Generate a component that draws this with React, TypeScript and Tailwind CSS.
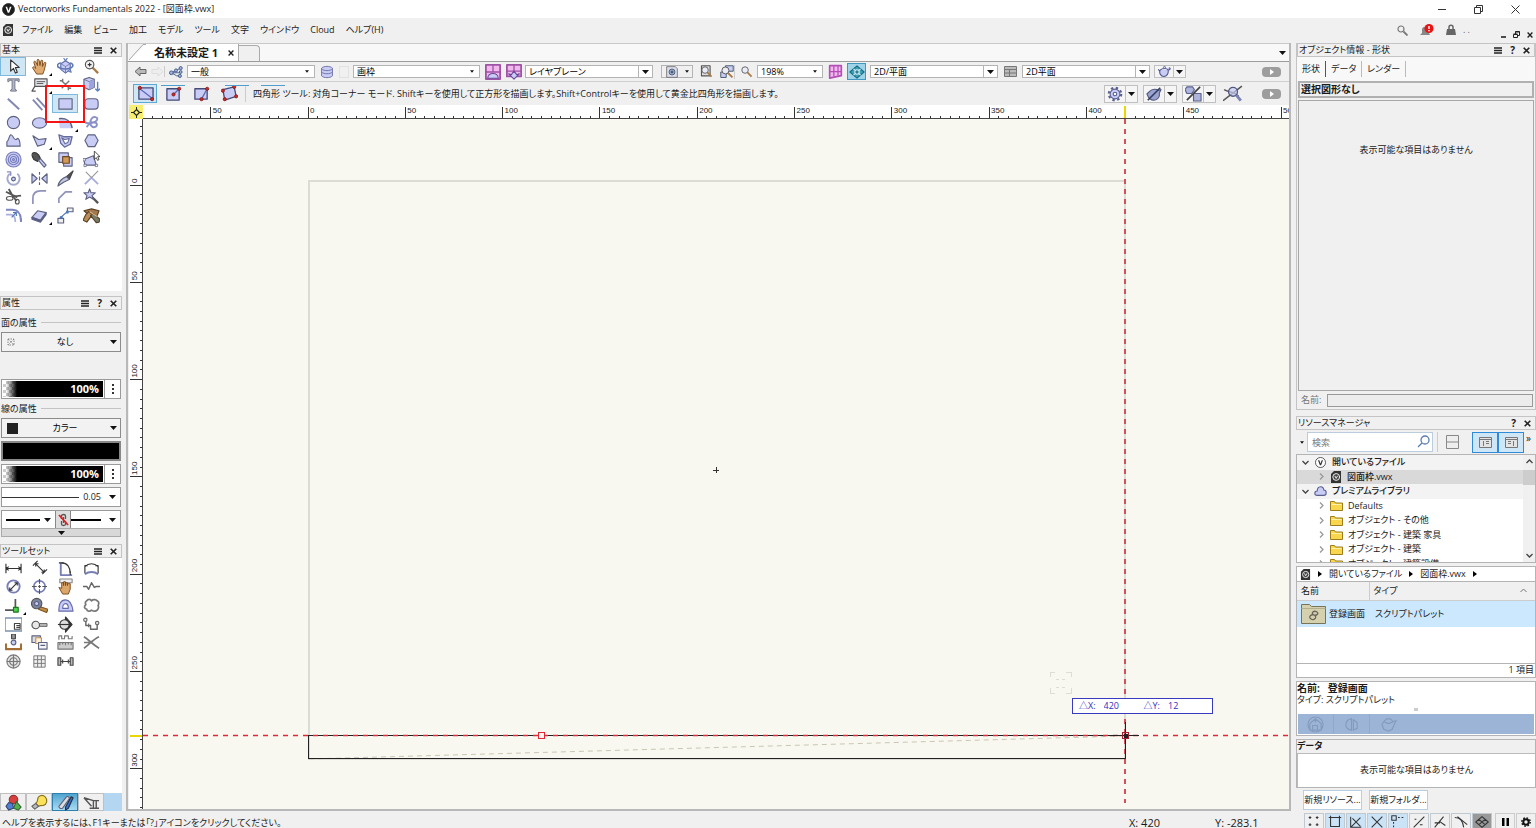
import type { ReactNode } from "react";
import { clsx } from "clsx";

const LAV = "#c9cdf6";
const INK = "#5d6280";

const Ico = ({ size = 18, children }: { size?: number; children: ReactNode }) => (
  <svg
    width={size}
    height={size}
    viewBox="0 0 18 18"
    fill="none"
    stroke={INK}
    strokeWidth="1.2"
    strokeLinejoin="round"
    className="shrink-0"
    aria-hidden="true"
  >
    {children}
  </svg>
);

const Caret = ({ small }: { small?: boolean }) => (
  <svg width={small ? 4 : 7} height={small ? 3 : 4} viewBox="0 0 7 4" className="shrink-0" aria-hidden="true">
    <path d="M0 0h7L3.5 4z" fill="#111" />
  </svg>
);

const CloseIcon = ({ size = 7 }: { size?: number }) => (
  <svg width={size} height={size} viewBox="0 0 7 7" stroke="#222" strokeWidth="1.6" aria-hidden="true">
    <path d="M.7.7l5.6 5.6M6.3.7L.7 6.3" />
  </svg>
);

type Tool = { name: string; flyout?: boolean; selected?: boolean; icon: ReactNode };

const basicTools: Tool[] = [
  { name: "セレクション", selected: true, icon: <path d="M6 2v12l3-3 2 5 2-1-2-5h4z" fill="#fff" stroke="#333" /> },
  {
    name: "パン",
    flyout: true,
    icon: (
      <path
        d="M6 17l-4-6c-1-1.500 1-2.300 2-1l1 1L3 4.500c0-1.300 1.500-1.500 2-.3L7 8 6.500 2.500c0-1.400 1.800-1.400 2.100 0L9.500 8l1-5c.4-1.200 2-.9 1.900.4L12 9l2-4c.7-1 2-.4 1.700.8L14 13l-1.500 4z"
        fill="#e0ab70"
        stroke="#7a4a1c"
        strokeWidth="1"
      />
    ),
  },
  {
    name: "フライオーバー",
    icon: (
      <g>
        <path d="M9 3l5 3v6l-5 4-5-4V6z" fill={LAV} stroke="#5f6ea8" />
        <path d="M4 6l5 3 5-3M9 9v6" stroke="#5f6ea8" strokeWidth=".8" />
        <path d="M4 5C0 6-1 9 3 10.500c4 1.500 9 1.200 12-.2 3-1.500 2-4.300-1-5.300" stroke="#5f79b5" strokeWidth="1.700" />
        <path d="M7 0l2 3 2-3M14 12l1 3-3-1" stroke="#5f79b5" />
      </g>
    ),
  },
  {
    name: "拡大表示",
    icon: (
      <g>
        <path d="M10 10l6 6" stroke="#a97a45" strokeWidth="2.400" />
        <circle cx="7" cy="7" r="4.500" fill="#f2f2f4" stroke="#555" />
        <path d="M5 7h4M7 5v4" stroke="#333" />
      </g>
    ),
  },
  { name: "文字", icon: <path d="M3 3h12v3h-1l-1-1.500h-2.500V14l1.500.8V16H6v-1.200l1.500-.8V4.500H5L4 6H3z" fill="#b5b8c8" stroke="#666b80" strokeWidth=".9" /> },
  {
    name: "引出線付き注釈",
    flyout: true,
    icon: (
      <g stroke="#555">
        <path d="M4 3h13v8H4z" fill="#e8e8ee" />
        <path d="M6 6h9M6 8h7" strokeWidth="1" />
        <path d="M4 11l-3 5h4" />
      </g>
    ),
  },
  { name: "図形選択", icon: <path d="M5 5l8 8M13 5l-8 8M3 5h3V3M15 13h-3v2" stroke="#777" strokeWidth="1.500" /> },
  {
    name: "押し出し",
    icon: (
      <g>
        <path d="M1 3.500l5.500-2 5.500 2v8.500l-5.500 2.500L1 12z" fill={LAV} />
        <path d="M1 3.500L6.500 6 12 3.500" strokeWidth=".8" />
        <path d="M6.500 6v8.500L12 12V3.500z" fill="#9da3dd" stroke="none" />
        <path d="M15.500 6v10M13 13.500l2.500 2.500 2.500-2.500" stroke="#5c83bd" strokeWidth="1.500" />
      </g>
    ),
  },
  { name: "直線", icon: <path d="M3 4l12 11" stroke="#8488b4" strokeWidth="2.200" /> },
  { name: "ダブルライン", icon: <path d="M2 5l10 11M6 3l10 11" stroke="#8488b4" strokeWidth="2" /> },
  { name: "四角形", selected: true, icon: <rect x="2" y="4" width="14" height="11" fill={LAV} /> },
  { name: "隅の丸い四角形", icon: <rect x="2" y="4" width="14" height="11" rx="3.500" fill={LAV} /> },
  { name: "円", icon: <circle cx="9" cy="9" r="6.500" fill={LAV} /> },
  { name: "楕円", icon: <ellipse cx="9" cy="9.500" rx="7.500" ry="5.500" fill={LAV} /> },
  {
    name: "円弧",
    flyout: true,
    icon: (
      <g>
        <path d="M2 6c7-2 12 2 13 9H3z" fill={LAV} stroke="none" />
        <path d="M2 5c8-1 13 3 14 10" strokeWidth="1.500" />
      </g>
    ),
  },
  {
    name: "フリーハンド",
    icon: <path d="M1 8c3 3 12 2 14-2 1-3-4-4-6-1s-2 8 2 9c4 0 5-4 2-5-4-1-8 2-9 5" stroke="#8a90c8" strokeWidth="2" />,
  },
  { name: "曲線", icon: <path d="M2 15V10c2 0 2-6 4-7s3 5 5 5 2-2 3-1 2 3 2 8z" fill={LAV} /> },
  { name: "多角形", flyout: true, icon: <path d="M2 4l6 4 8-1-2 6-7 2z" fill={LAV} /> },
  {
    name: "ポリライン",
    icon: (
      <g stroke="#666c9c">
        <path d="M2 3l5 2 9 0-2 8-6 3-4-4z" fill={LAV} strokeWidth="1.400" />
        <path d="M5 6l3 2 5-1-1.500 4-3 1.500z" fill="#fff" />
      </g>
    ),
  },
  { name: "正多角形", icon: <path d="M5.500 3h7L16 9l-3.500 6.500h-7L2 9z" fill={LAV} /> },
  {
    name: "らせん",
    icon: (
      <g stroke="#777dba">
        <circle cx="9" cy="9" r="8" fill={LAV} />
        <circle cx="9" cy="9" r="5.500" />
        <circle cx="9" cy="9" r="3.200" />
        <circle cx="9" cy="9" r="1" />
      </g>
    ),
  },
  {
    name: "アイドロッパ",
    icon: (
      <g>
        <path d="M2 2c2-1 4 0 6 2l2 4-3 3-4-2C1 6 1 3 2 2z" fill="#555" stroke="#333" />
        <path d="M8 10l6 7 2-2-6-7z" fill={LAV} />
      </g>
    ),
  },
  {
    name: "クリップ",
    icon: (
      <g>
        <path d="M2 2h10v10H2zM7 7h9v9H7z" fill={LAV} />
        <path d="M6 6h7v7H6z" fill="#d39a56" stroke="#6b4720" />
      </g>
    ),
  },
  {
    name: "変形",
    icon: (
      <g>
        <path d="M1 9l10-4 3 10H2z" fill={LAV} />
        <path d="M0 8h2.500v2.500H0zM1 14h2.500v2.500H1zM13 14h2.500v2.500H13z" fill="#fff" strokeWidth=".8" />
        <path d="M12 0v9l2-2 1.500 3 1.500-1-1.500-3H18z" fill="#fff" stroke="#333" strokeWidth=".9" />
      </g>
    ),
  },
  {
    name: "回転",
    icon: (
      <g>
        <path d="M5 4a6.500 6.500 0 1 0 8 0" stroke="#a3a8cf" strokeWidth="2" />
        <circle cx="9" cy="9.500" r="2" fill={LAV} />
        <path d="M2 2h4v4" stroke="#8b90bd" strokeWidth="1.500" />
      </g>
    ),
  },
  { name: "ミラー", icon: <path d="M1 4v10l5.500-5zM17 4v10l-5.500-5zM9 2v3M9 7v4M9 13v3" fill={LAV} /> },
  {
    name: "切断",
    icon: (
      <g>
        <path d="M17 1l-4 9-3-3z" fill="#555" stroke="#444" />
        <path d="M10 7l3 3-6 3-6 4c1-5 4-8 9-10z" fill="#c4c8da" />
      </g>
    ),
  },
  {
    name: "トリミング",
    icon: (
      <g strokeWidth="2">
        <path d="M2 15L9 8l7 7" stroke="#a9addb" />
        <path d="M16 1L9 8 3 2" stroke="#999" strokeWidth="1.200" />
      </g>
    ),
  },
  {
    name: "消しゴム",
    icon: (
      <g stroke="#555">
        <path d="M1 4l12 6M4 1l5 9" strokeWidth="2" />
        <path d="M17 8l-9 1M9 9l3 5" strokeWidth="1.800" />
        <ellipse cx="5" cy="11" rx="3.500" ry="2" />
        <ellipse cx="13" cy="14.500" rx="2" ry="2.500" />
      </g>
    ),
  },
  { name: "フィレット", icon: <path d="M2 17v-6c0-5 3-8 8-8h6" stroke="#8f93bd" strokeWidth="1.800" /> },
  { name: "面取り", icon: <path d="M2 16v-5l7-7h7" stroke="#8f93bd" strokeWidth="1.800" /> },
  {
    name: "マジックワンド",
    icon: (
      <g>
        <path d="M9 9l7 7" stroke="#555" strokeWidth="2.400" />
        <path d="M7 1l1.500 4L13 5 9.500 8l1.500 4-4-2.500L3 12l1.200-4L1 5h4.500z" fill={LAV} />
      </g>
    ),
  },
  {
    name: "オフセット",
    icon: (
      <g stroke="#8086c0">
        <path d="M1 3h7c6 0 9 4 9 13" strokeWidth="2.200" />
        <path d="M1 8h5c4 0 5 3 5 8" stroke="#aab0dd" strokeWidth="1.800" />
        <path d="M7 11l5-5M8.500 6H12v3.500" stroke="#4b78b8" />
      </g>
    ),
  },
  {
    name: "イレーサ",
    flyout: true,
    icon: (
      <g>
        <path d="M1 11l6-7 9 2-6 8z" fill={LAV} />
        <path d="M1 11v2l9 3 6-8V6l-6 8z" fill="#4c5590" />
      </g>
    ),
  },
  {
    name: "整列",
    icon: (
      <g>
        <path d="M4 11l8-7" stroke="#4b78b8" />
        <path d="M1 12h6v5H1zM11 1h6v4h-6z" fill="#eee" />
        <path d="M3 11h3M11 7v-3" stroke="#4b78b8" strokeWidth="2.500" />
      </g>
    ),
  },
  {
    name: "属性マッピング",
    icon: (
      <g stroke="#5a3e22">
        <path d="M1 4l8-2 8 2-2 5-6 2z" fill="#a47a4c" />
        <path d="M3 8l3-3 4 3-6 8-4-2z" fill="#b98e58" />
        <path d="M8 9l3-2 7 6-1 3-3 .5z" fill="#787d6c" />
        <path d="M7 5l8 5" stroke="#d6b58a" />
      </g>
    ),
  },
];

const setTools: Tool[] = [
  { name: "縦横寸法", icon: <path d="M1 4v10M17 4v10M1 9h16M4 7L1 9l3 2M14 7l3 2-3 2" stroke="#333" /> },
  { name: "斜め寸法", icon: <path d="M5 4l9 9M2 6l5-5M12 15l5-5M5 7V4h3M14 10v3h-3" stroke="#333" /> },
  {
    name: "円弧角度寸法",
    icon: (
      <g>
        <path d="M4 3v13h12" stroke="#777db5" strokeWidth="2" />
        <path d="M5 3c6 0 9 5 9 11" stroke="#333" />
        <path d="M2 3h5M14 12v4" stroke="#333" />
      </g>
    ),
  },
  {
    name: "円弧寸法",
    icon: (
      <g>
        <path d="M2 15c4-3 10-3 14 0" stroke="#777db5" strokeWidth="2" />
        <path d="M2 14V7c4-4 10-4 14 0v7M2 9V6h3M16 9V6h-3" stroke="#333" />
      </g>
    ),
  },
  {
    name: "直径寸法",
    icon: (
      <g>
        <circle cx="9" cy="9" r="6.500" stroke="#777db5" strokeWidth="2" />
        <path d="M5 13l8-8M10 5h3v3M5 10v3h3" stroke="#333" />
      </g>
    ),
  },
  {
    name: "中心マーク",
    icon: (
      <g>
        <circle cx="9" cy="9" r="6" stroke="#777db5" strokeWidth="1.800" />
        <path d="M9 1v16M1 9h16" stroke="#555" strokeDasharray="5 1.500 3 1.500" />
      </g>
    ),
  },
  {
    name: "選択寸法",
    icon: (
      <g>
        <path d="M3 1h13v4H3z" fill="#eee" stroke="#888" />
        <path d="M6 17l-4-7 3 1V5h2v3-4h2v4-3h2v3-2h3v6l-2 5z" fill="#dca66b" stroke="#7a4a1c" strokeWidth="1" />
      </g>
    ),
  },
  { name: "切断記号", icon: <path d="M0 9h4l2 3 3-7 3 5 2-1h4" stroke="#666" strokeWidth="1.500" /> },
  {
    name: "基準点",
    flyout: true,
    icon: (
      <g>
        <path d="M0 14h11V2" stroke="#555" strokeWidth="1.800" />
        <rect x="9" y="11" width="5" height="5" fill="#4fd04f" stroke="#187a18" />
      </g>
    ),
  },
  {
    name: "距離計測",
    icon: (
      <g>
        <path d="M9 10l9 3-1.500 3.500L8 13z" fill="#c58d45" stroke="#7a5420" />
        <circle cx="6" cy="7" r="5.500" fill="#7c839d" stroke="#555" />
        <circle cx="6" cy="7" r="2.200" fill={LAV} />
      </g>
    ),
  },
  {
    name: "分度器",
    icon: (
      <path
        d="M2 15c0-8 2-12 7-12s7 5 8 12zM6 12h6c0-3-1-5-3-5s-3 2-3 5z"
        fill={LAV}
        stroke="#666cab"
        fillRule="evenodd"
      />
    ),
  },
  {
    name: "雲マーク",
    icon: (
      <path
        d="M4 4c1-2 4-2 5 0 2-2 5-1 6 0 2 1 2 3 1 5 1 2 0 4-1 5-2 2-4 1-6 0-2 2-5 1-5-1-3-1-3-3-1-5-1-2-1-3 1-4z"
        stroke="#777"
        strokeWidth="1.800"
      />
    ),
  },
  {
    name: "図面枠",
    icon: (
      <g>
        <path d="M0 2h18v14H0z" fill="#fff" stroke="#7d93ad" strokeWidth="1.600" />
        <path d="M10 8h6v6h-6zM12 10h4M12 12h4" stroke="#444" />
      </g>
    ),
  },
  {
    name: "詳細マーク",
    icon: (
      <g>
        <path d="M9 8h8v3H9z" fill="#bbb" stroke="#555" strokeWidth=".9" />
        <circle cx="5" cy="9.500" r="4" fill="#e8e8e8" stroke="#555" />
      </g>
    ),
  },
  {
    name: "断面マーク",
    icon: (
      <g stroke="#333">
        <path d="M9 1l7 8-7 8z" fill="#333" />
        <circle cx="8" cy="9" r="5" fill="#ddd" />
        <path d="M1 9h13" />
      </g>
    ),
  },
  {
    name: "展開マーク",
    icon: (
      <g stroke="#666">
        <path d="M3 5v5h5v4h7V9" strokeWidth="1.500" />
        <circle cx="2.500" cy="4" r="1.800" fill="#eee" />
        <circle cx="15" cy="7.500" r="1.800" fill="#eee" />
        <path d="M6 8v4" />
      </g>
    ),
  },
  {
    name: "スタンプ",
    icon: (
      <g>
        <path d="M1 10v6h16v-6" stroke="#a56d32" strokeWidth="2.200" />
        <path d="M7 0h4v5H7z" fill="#999" stroke="#444" />
        <circle cx="9" cy="9" r="2.500" fill={LAV} />
      </g>
    ),
  },
  {
    name: "引出線",
    icon: (
      <g>
        <path d="M1 2h9v7H1z" fill="#ddd" />
        <path d="M5 4h6v6H5z" fill="#fff0d8" stroke="#c0905a" />
        <path d="M8 9h9v7H8zM10 12h5" fill="#f4f4f4" />
      </g>
    ),
  },
  {
    name: "スケールバー",
    icon: (
      <g stroke="#777">
        <path d="M1 9h16v7H1z" fill="#ccc" />
        <path d="M3 9v3M6 9v2M9 9v3M12 9v2M15 9v3M2 6V2h3v3h3V2h4v3h4V2" />
      </g>
    ),
  },
  { name: "破断線", icon: <path d="M1 3c5 3 9 8 16 12M1 15C6 12 10 6 17 3M1 9h7" stroke="#777" strokeWidth="1.800" /> },
  {
    name: "グリッド円",
    icon: (
      <g stroke="#777">
        <circle cx="9" cy="9" r="7" fill="#e4e4e4" />
        <circle cx="9" cy="9" r="4" />
        <path d="M9 2v14M2 9h14" />
      </g>
    ),
  },
  { name: "グリッド", icon: <path d="M3 3h12v12H3zM7 3v12M11 3v12M3 7h12M3 11h12" fill="#f0f0f0" stroke="#777" strokeWidth="1" /> },
  {
    name: "連結",
    icon: (
      <g stroke="#444">
        <path d="M1 5h3v8H1zM14 5h3v8h-3z" fill="#bbb" />
        <path d="M4 9h10M6 7v4M12 7v4" />
      </g>
    ),
  },
];

const ToolGrid = ({ tools, className }: { tools: Tool[]; className: string }) => (
  <div className={clsx("grid w-[104px] auto-rows-fr grid-cols-4", className)}>
    {tools.map((tool) => (
      <button
        key={tool.name}
        aria-label={tool.name}
        className={clsx(
          "relative flex items-center justify-center",
          tool.selected && "border border-[#7cb9dc] bg-[#cfe6f5]",
        )}
      >
        <Ico size={17}>{tool.icon}</Ico>
        {tool.flyout && (
          <svg width="3" height="3" className="absolute right-0 bottom-0" aria-hidden="true">
            <path d="M3 0v3H0z" fill="#000" />
          </svg>
        )}
      </button>
    ))}
  </div>
);

const PanelHeader = ({ title, menu, help }: { title: string; menu?: boolean; help?: boolean }) => (
  <div className="flex h-[14px] shrink-0 items-center border border-[#c4c4c4] bg-[#f0f0f0] pr-1 pl-px">
    <h2 className="flex-1 truncate leading-3">{title}</h2>
    <div className="flex items-center gap-2">
      {menu && (
        <button aria-label="メニュー">
          <svg width="8" height="7" stroke="#222" strokeWidth="1.400">
            <path d="M0 1h8M0 3.500h8M0 6h8" />
          </svg>
        </button>
      )}
      {help && (
        <button aria-label="ヘルプ" className="text-[10px] leading-3 font-bold">
          ?
        </button>
      )}
      <button aria-label="閉じる">
        <CloseIcon />
      </button>
    </div>
  </div>
);

const Combo = ({ label, value, className, small }: { label: string; value: string; className: string; small?: boolean }) => (
  <div className={clsx("relative h-[13px] shrink-0", className)}>
    <select
      aria-label={label}
      defaultValue={value}
      className="block h-full w-full appearance-none border border-[#b4b4b4] bg-white pl-[3px] leading-[11px] text-black"
    >
      <option>{value}</option>
    </select>
    <span
      className={clsx(
        "pointer-events-none absolute inset-y-px right-px flex w-[14px] items-center justify-center bg-white",
        !small && "border-l border-[#b4b4b4]",
      )}
    >
      <Caret small={small} />
    </span>
  </div>
);

const DropButton = ({ label, className, children }: { label: string; className: string; children: ReactNode }) => (
  <button aria-label={label} className={clsx("flex shrink-0 items-stretch border border-[#c0c0c0] bg-[#f5f5f5]", className)}>
    <span className="flex flex-1 items-center justify-center">{children}</span>
    <span className="flex w-3 items-center justify-center border-l border-[#c0c0c0]">
      <Caret />
    </span>
  </button>
);

const Pill = () => (
  <button aria-label="さらに表示" className="flex h-[10px] w-[19px] items-center justify-center rounded-[4px] bg-[#9d9d9d]">
    <svg width="4" height="6">
      <path d="M0 0l4 3-4 3z" fill="#fff" />
    </svg>
  </button>
);

const IconBtn = ({ label, className, children }: { label: string; className: string; children: ReactNode }) => (
  <button aria-label={label} className={clsx("flex shrink-0 items-center justify-center", className)}>
    {children}
  </button>
);

const Glass = () => (
  <g>
    <path d="M10 10l6 6" stroke="#a97a45" strokeWidth="2.400" />
    <circle cx="7" cy="7" r="4.500" fill="#e9ecf6" stroke="#555" />
  </g>
);

const Logo = ({ size = 12, inverse }: { size?: number; inverse?: boolean }) => (
  <svg width={size} height={size} viewBox="0 0 14 14" className="shrink-0" aria-hidden="true">
    <circle cx="7" cy="7" r="6.400" fill={inverse ? "#fff" : "#1d1d1d"} stroke="#333" />
    <path d="M3.800 4h1.700L7 8.300 8.500 4h1.700L7.800 10.500H6.200z" fill={inverse ? "#333" : "#fff"} />
  </svg>
);

const DocIcon = ({ size = 12 }: { size?: number }) => (
  <svg width={size} height={size} viewBox="0 0 12 12" className="shrink-0" aria-hidden="true">
    <path d="M1 3l3-3h7v12H1z" fill="#333" />
    <circle cx="6.200" cy="6" r="3.400" fill="#444" stroke="#eee" />
    <path d="M4.800 4.800l1.400 2.600 1.400-2.600" fill="none" stroke="#eee" />
  </svg>
);

const menus = ["ファイル", "編集", "ビュー", "加工", "モデル", "ツール", "文字", "ウインドウ", "Cloud", "ヘルプ(H)"];

const TitleBar = () => (
  <header className="flex h-[18px] shrink-0 items-center bg-white pl-[2px]">
    <Logo size={13} />
    <h1 className="ml-[3px] flex-1">Vectorworks Fundamentals 2022 - [図面枠.vwx]</h1>
    <div className="flex items-center gap-7 pr-4">
      <IconBtn label="最小化" className="h-3 w-[9px]">
        <svg width="8" height="8" stroke="#333"><path d="M0 4.500h8" /></svg>
      </IconBtn>
      <IconBtn label="元に戻す" className="h-3 w-[9px]">
        <svg width="9" height="9" stroke="#333" fill="none"><path d="M.5 2.500h6v6h-6zM2.500 2.500v-2h6v6h-2" /></svg>
      </IconBtn>
      <IconBtn label="閉じる" className="h-3 w-[9px]">
        <svg width="9" height="9" stroke="#333"><path d="M.5.5l8 8M8.500.5l-8 8" /></svg>
      </IconBtn>
    </div>
  </header>
);

const MenuBar = () => (
  <nav className="flex h-[24px] shrink-0 items-center pl-[2px]">
    <DocIcon size={12} />
    <ul className="ml-2 flex flex-1 gap-[11px]">
      {menus.map((m) => (
        <li key={m}>
          <button>{m}</button>
        </li>
      ))}
    </ul>
    <div className="flex items-center gap-3 pr-[30px]">
      <IconBtn label="検索" className="w-[11px]">
        <svg width="11" height="11" viewBox="0 0 11 11" fill="none" stroke="#777" strokeWidth="1.200">
          <circle cx="4" cy="4" r="3" />
          <path d="M6.500 6.500l4 4" strokeWidth="1.800" />
        </svg>
      </IconBtn>
      <IconBtn label="通知" className="w-[14px]">
        <svg width="14" height="13" viewBox="0 0 14 13">
          <path d="M2 9V5c1-3 5-3 7 0v4l1 2H0z" fill="#888" />
          <circle cx="9" cy="4.500" r="4.500" fill="#e81313" />
          <path d="M9 2v3M9 6v1.200" stroke="#fff" strokeWidth="1.400" />
        </svg>
      </IconBtn>
      <div className="flex items-center gap-[7px]">
        <IconBtn label="ログイン" className="w-[10px]">
          <svg width="10" height="12" viewBox="0 0 10 12">
            <path d="M3 6V3c0-2.500 4-2.500 4 0v3" fill="none" stroke="#666" strokeWidth="1.500" />
            <path d="M1 5h8l1 6H0z" fill="#666" />
          </svg>
        </IconBtn>
        <span className="text-[#666]">. .</span>
      </div>
    </div>
    <div className="flex items-center gap-[6px] self-end pr-[3px] pb-[4px]">
      <IconBtn label="図面を最小化" className="w-[7px]">
        <svg width="7" height="7" stroke="#222" strokeWidth="1.600"><path d="M1 6h5" /></svg>
      </IconBtn>
      <IconBtn label="図面を元に戻す" className="w-[7px]">
        <svg width="7" height="7" stroke="#222" fill="none"><path d="M.5 3.500h4v3h-4zM2.500 3.500v-3h4v4h-2M.5 3h4M2.500 1h4" /></svg>
      </IconBtn>
      <IconBtn label="図面を閉じる" className="w-[7px]">
        <CloseIcon size={6} />
      </IconBtn>
    </div>
  </nav>
);

const OpacityRow = ({ label }: { label: string }) => (
  <div className="flex h-[20px] border border-[#9a9a9a] bg-white">
    <button
      aria-label={label}
      className="m-px flex flex-1 items-center justify-end bg-[linear-gradient(90deg,transparent_3px,#000_14px),repeating-conic-gradient(#ccc_0_25%,#fff_0_50%)] bg-[size:100%_100%,6px_6px] pr-1 text-[11px] font-bold text-white"
    >
      100%
    </button>
    <button aria-label={`${label} 設定`} className="flex w-[16px] items-center justify-center border-l border-[#9a9a9a]">
      <svg width="2" height="11" fill="#333">
        <path d="M0 0h2v2H0zM0 4h2v2H0zM0 8h2v2H0z" />
      </svg>
    </button>
  </div>
);

const SectionLabel = ({ children }: { children: ReactNode }) => (
  <h3 className="flex h-[13px] items-center gap-1">
    {children}
    <span className="h-px flex-1 bg-[#c4c4c4]" />
  </h3>
);

const WideSelect = ({ label, value, swatch }: { label: string; value: string; swatch: ReactNode }) => (
  <div className="relative h-[20px]">
    <select
      aria-label={label}
      defaultValue={value}
      className="block h-full w-full appearance-none border border-[#8c8c8c] bg-[#f2f2f2] pr-[6px] pl-[14px] text-center leading-4 text-black [text-align-last:center]"
    >
      <option>{value}</option>
    </select>
    <span className="pointer-events-none absolute inset-y-0 left-[6px] flex items-center">{swatch}</span>
    <span className="pointer-events-none absolute inset-y-0 right-1 flex items-center">
      <Caret />
    </span>
  </div>
);

const Attributes = () => (
  <section className="mt-[5px] flex shrink-0 flex-col">
    <PanelHeader title="属性" menu help />
    <div className="flex flex-col px-px pt-[6px]">
      <SectionLabel>面の属性</SectionLabel>
      <div className="mt-[3px] mb-[27px]">
        <WideSelect
          label="面の属性"
          value="なし"
          swatch={
            <svg width="8" height="8" stroke="#888" strokeDasharray="1.500 1">
              <path d="M1 1h6v6H1zM1 1l6 6M7 1L1 7" fill="none" />
            </svg>
          }
        />
      </div>
      <OpacityRow label="面の不透明度" />
      <div className="mt-[3px]">
        <SectionLabel>線の属性</SectionLabel>
      </div>
      <div className="mt-[3px] flex flex-col gap-[3px]">
        <WideSelect label="線の属性" value="カラー" swatch={<span className="size-[11px] bg-[#222]" />} />
        <button aria-label="線の色" className="h-[20px] border-2 border-[#888] bg-black" />
        <OpacityRow label="線の不透明度" />
        <button className="flex h-[20px] items-center gap-1 border border-[#9a9a9a] bg-white pr-1">
          <span className="h-px flex-1 bg-[#333]" />
          0.05
          <span className="ml-1">
            <Caret />
          </span>
        </button>
        <div>
          <div className="flex h-[18px] border border-b-0 border-[#9a9a9a] bg-white">
            <button aria-label="始点マーカー" className="flex flex-1 items-center gap-1 px-1">
              <span className="h-[2px] flex-1 bg-black" />
              <Caret />
            </button>
            <button aria-label="マーカーの連動" className="flex w-[16px] items-center justify-center border-x border-[#888] bg-[#ddd]">
              <svg width="11" height="14" viewBox="0 0 11 14" fill="none">
                <path d="M3.500 6V3c0-2 4-2 4 0v3M3.500 8v3c0 2 4 2 4 0V8M5.500 4v6" stroke="#555" strokeWidth="1.300" />
                <path d="M1 2l9 10" stroke="#e02020" strokeWidth="1.800" />
              </svg>
            </button>
            <button aria-label="終点マーカー" className="flex flex-1 items-center gap-2 pr-1">
              <span className="h-[2px] flex-1 bg-black" />
              <Caret />
            </button>
          </div>
          <button aria-label="展開" className="flex h-[9px] w-full items-center justify-center border border-[#aaa] bg-[#d8d8d8]">
            <Caret />
          </button>
        </div>
      </div>
    </div>
  </section>
);

const ToolSets = () => (
  <section className="mt-[7px] flex min-h-0 flex-1 flex-col">
    <PanelHeader title="ツールセット" menu />
    <div className="flex flex-1 flex-col bg-white pt-px">
      <ToolGrid tools={setTools} className="h-[112px]" />
      <div className="mt-auto flex h-[18px] bg-[#b5d6f0]">
        <IconBtn label="ビジュアライズ" className="w-[26px] border border-[#c0c0c0] bg-[#f0f0f0]">
          <Ico size={17}>
            <circle cx="9" cy="6" r="4.500" fill="#d84040" stroke="#933" />
            <path d="M1 13l3-4 4 1 1 5-5 2z" fill="#4f7fd6" stroke="#346" />
            <path d="M9 15l3-7 5 6-3 3z" fill="#53b04e" stroke="#363" />
          </Ico>
        </IconBtn>
        <IconBtn label="照明" className="w-[26px] border border-[#c0c0c0] bg-[#f0f0f0]">
          <Ico size={17}>
            <path d="M15 3c-3-3-8-1-8 3 0 2-1 3-2 4l3 3c1-1 3-1 5-1 4-1 5-6 2-9z" fill="#fbe25a" stroke="#8a7520" />
            <path d="M5 10l-4 3 3 3 4-3z" fill="#bbb" stroke="#666" />
          </Ico>
        </IconBtn>
        <IconBtn label="寸法/注釈" className="w-[26px] border border-[#2f7fae] bg-gradient-to-b from-[#4ea4d0] to-[#a8dbf4]">
          <Ico size={17}>
            <path d="M2 13L10 3c2-1 3 0 3 2L6 15c-2 1-4 0-4-2z" fill="#ddd" />
            <path d="M9 14L15 3l2 1-5 11-3 2z" fill="#3b6fd0" stroke="#234" />
          </Ico>
        </IconBtn>
        <IconBtn label="ファスナー" className="w-[26px] border border-[#c0c0c0] bg-[#f0f0f0]">
          <Ico size={17}>
            <path d="M1 4l10 3h6M11 7v8M7 15h10M1 4l8 9M14 7v8" stroke="#555" strokeWidth="1.500" />
          </Ico>
        </IconBtn>
      </div>
    </div>
  </section>
);

const LeftColumn = () => (
  <aside className="flex w-[122px] shrink-0 flex-col">
    <PanelHeader title="基本" menu />
    <section className="relative h-[234px] shrink-0 bg-white">
      <ToolGrid tools={basicTools} className="h-[168px]" />
      <div className="pointer-events-none absolute top-[28px] left-[45px] h-[38px] w-[40px] border-2 border-[#f51414]" />
    </section>
    <Attributes />
    <ToolSets />
  </aside>
);

const ViewBar = () => (
  <div className="flex h-[20px] shrink-0 items-center gap-1 border-t border-[#9c9c9c] pl-[5px]">
    <IconBtn label="前の画面" className="w-[14px]">
      <svg width="13" height="11" fill="#b9b9b9" stroke="#666"><path d="M6 1L1 5.500 6 10V7.500h6v-4H6z" /></svg>
    </IconBtn>
    <IconBtn label="次の画面" className="w-[14px] border-r border-[#ccc]">
      <svg width="13" height="11" fill="#eee" stroke="#ddd"><path d="M7 1l5 4.500L7 10V7.500H1v-4h6z" /></svg>
    </IconBtn>
    <IconBtn label="クラス" className="w-[14px]">
      <Ico size={14}>
        <path d="M3 10l6-3 6-3M3 10l6 0h6M3 10l7 4h5" stroke="#445a88" />
        <circle cx="3" cy="10" r="2.400" fill="#9fb2dd" stroke="#445a88" />
        <circle cx="9" cy="7" r="2" fill="#9fb2dd" stroke="#445a88" />
        <circle cx="15" cy="4" r="2" fill="#9fb2dd" stroke="#445a88" />
        <circle cx="15" cy="9" r="1.800" fill="#9fb2dd" stroke="#445a88" />
        <circle cx="14" cy="14" r="2" fill="#9fb2dd" stroke="#445a88" />
      </Ico>
    </IconBtn>
    <Combo label="アクティブクラス" value="一般" className="w-[128px]" small />
    <IconBtn label="レイヤ" className="w-4">
      <Ico size={14}>
        <path d="M2 4c3-3 11-3 14 0v10c-3 3-11 3-14 0z" fill={LAV} stroke="#6a71a5" />
        <path d="M2 5c3 3 11 3 14 0M2 9c3 3 11 3 14 0" stroke="#6a71a5" />
      </Ico>
    </IconBtn>
    <span className="h-3 w-[10px] border border-[#e2e2e2]" />
    <Combo label="アクティブレイヤ" value="画枠" className="w-[127px]" small />
    <IconBtn label="プラン回転" className="w-[18px]">
      <Ico size={16}>
        <path d="M1 1h16v16H1z" fill="#f1b8ee" stroke="#a052a5" strokeWidth="2" />
        <path d="M1 9h16M9 1v8" stroke="#a052a5" strokeWidth="1.500" />
        <path d="M3 16c1-7 11-7 12 0z" fill={LAV} stroke="#6a4a9a" />
      </Ico>
    </IconBtn>
    <IconBtn label="図形に合わせる" className="w-[15px]">
      <Ico size={16}>
        <path d="M1 1h16v13H1z" fill="#f1b8ee" stroke="#a052a5" strokeWidth="2" />
        <path d="M1 8h16M9 1v8" stroke="#a052a5" strokeWidth="1.500" />
        <path d="M3 11l3 1 3-4 3 4 3-1-6 6z" fill={LAV} stroke="#6a4a9a" />
      </Ico>
    </IconBtn>
    <Combo label="基準面" value="レイヤプレーン" className="w-[128px]" />
    <button aria-label="保存済みビュー" className="ml-1 flex h-[13px] w-8 shrink-0 items-center justify-around border border-[#b4b4b4]">
      <Ico size={12}>
        <path d="M1 1h13l3 3v13H1z" fill="#dde" stroke="#666" />
        <circle cx="9" cy="9" r="4.500" fill="#8fa8cc" stroke="#456" />
        <circle cx="9" cy="9" r="1.500" fill="#234" />
      </Ico>
      <Caret small />
    </button>
    <IconBtn label="用紙全体を見る" className="w-[18px]">
      <Ico size={13}>
        <path d="M2 1h12v14H2z" fill="#ddd" stroke="#555" strokeWidth="1.500" />
        <Glass />
      </Ico>
    </IconBtn>
    <IconBtn label="図形全体を見る" className="w-4 border-r border-[#ccc]">
      <Ico size={14}>
        <path d="M7 1h10v7H7zM1 9h7v7H1z" fill={LAV} stroke="#456" />
        <Glass />
      </Ico>
    </IconBtn>
    <IconBtn label="ズーム" className="w-[14px]">
      <Ico size={13}><Glass /></Ico>
    </IconBtn>
    <Combo label="拡大率" value="198%" className="w-[66px]" small />
    <IconBtn label="統合ビュー" className="w-4">
      <Ico size={15}>
        <path d="M2 2h14v12L2 17z" fill="#f1b8ee" stroke="#b44fb6" strokeWidth="2" />
        <path d="M2 9h14M7 2v13M12 2v12" stroke="#b44fb6" strokeWidth="1.500" />
      </Ico>
    </IconBtn>
    <IconBtn label="マルチビュー" className="h-[17px] w-[19px] border border-[#3f98bf] bg-[#9fd3e8]">
      <Ico size={16}>
        <path d="M9 2l8 7-8 7-8-7z" fill="#3ba0b5" stroke="#176a80" />
        <path d="M5 5.500l8 7M13 5.500l-8 7" stroke="#d5eef5" />
        <circle cx="9" cy="9" r="2.500" fill="#2a8098" stroke="#d5eef5" />
      </Ico>
    </IconBtn>
    <Combo label="ビュー" value="2D/平面" className="w-[128px]" />
    <IconBtn label="ビュー設定" className="w-4">
      <svg width="13" height="11" fill="#bbb" stroke="#777">
        <path d="M.5.5h12v10H.5zM.5 3.500h12M5.500 3.500v7M.5 7h12" />
      </svg>
    </IconBtn>
    <Combo label="投影の方法" value="2D平面" className="w-[128px]" />
    <DropButton label="レンダリング" className="h-[13px] w-8">
      <Ico size={13}>
        <path d="M3 7c3-3 9-3 11 0 3 0 4-3 1-3M3 7c-2 4 1 9 5 9s7-4 6-9M3 9L0 6" fill={LAV} stroke="#50558a" strokeWidth="1.500" />
        <circle cx="9" cy="3.500" r="1.500" fill={LAV} />
      </Ico>
    </DropButton>
    <span className="mr-2 ml-auto">
      <Pill />
    </span>
  </div>
);

const modeDots: { name: string; shape: string; line?: string; dots: number[][] }[] = [
  { name: "対角コーナー", shape: "M2 3h15v12H2z", line: "M3 4l13 10", dots: [[3, 3], [16, 15]] },
  { name: "中心", shape: "M2 4h13v12H2z", line: "M9 10l6-6", dots: [[9, 10], [15, 4]] },
  { name: "辺の中心", shape: "M2 4h13v11H2z", line: "M9 15l6-11", dots: [[9, 15], [15, 4]] },
  { name: "回転", shape: "M2 5l12-3 2 10-12 4z", dots: [[2, 6], [14, 2], [16, 12], [4, 15]] },
];

const ModeBar = () => (
  <div className="relative flex h-[24px] shrink-0 items-center border-t border-[#cfcfcf] pl-[5px]">
    <div className="flex gap-1">
      {modeDots.map((m, i) => (
        <button
          key={m.name}
          aria-label={m.name}
          className={clsx("flex h-[19px] w-6 items-center justify-center", i === 0 && "border border-[#5aaad6] bg-[#cfe6f5]")}
        >
          <Ico size={17}>
            <path d={m.shape} fill={LAV} stroke="#454b78" strokeWidth="1.400" />
            {m.line && <path d={m.line} stroke="#5a6cb8" strokeWidth="1.400" />}
            {m.dots.map(([x, y]) => (
              <circle key={`${x}-${y}`} cx={x} cy={y} r="1.700" fill="#c92b2b" stroke="#801515" strokeWidth=".8" />
            ))}
          </Ico>
        </button>
      ))}
    </div>
    <span className="absolute top-[3px] left-[33px] h-px w-6 bg-[#4d9fcd]" />
    <span className="absolute top-[3px] left-[97px] h-px w-6 bg-[#4d9fcd]" />
    <span className="absolute top-[3px] left-[133px] h-px w-6 bg-[#4d9fcd]" />
    <p className="ml-1 h-4 truncate border-l border-[#ccc] pl-[7px] leading-4">
      四角形 ツール: 対角コーナー モード. Shiftキーを使用して正方形を描画します。Shift+Controlキーを使用して黄金比四角形を描画します。
    </p>
    <div className="mr-2 ml-auto flex items-center gap-[5px]">
      <DropButton label="設定" className="h-[18px] w-[34px]">
        <Ico size={16}>
          <circle cx="9" cy="9" r="7" stroke="#59608e" strokeWidth="2.400" strokeDasharray="2.700 2.800" />
          <circle cx="9" cy="9" r="5.500" fill={LAV} stroke="#59608e" />
          <circle cx="9" cy="9" r="2" fill="#fff" stroke="#59608e" />
        </Ico>
      </DropButton>
      <DropButton label="表示設定" className="h-[18px] w-[34px]">
        <Ico size={16}>
          <path d="M4 6c3-3 8-3 10-1l3-1-2 4c1 4-2 8-6 8s-6-2-7-5L1 9z" fill="#9aa2cf" stroke="#50587f" />
          <path d="M2 16L16 2" stroke="#333a5c" strokeWidth="1.800" />
        </Ico>
      </DropButton>
      <DropButton label="図形表示" className="h-[18px] w-[34px]">
        <Ico size={17}>
          <path d="M2 2h6l2 3-3 4H2L0 5zM9 9h8v8H9z" fill="#aeb5dd" stroke="#59608e" />
          <path d="M2 16L16 2" stroke="#444" strokeWidth="1.800" />
        </Ico>
      </DropButton>
      <IconBtn label="スナップルーペ" className="w-6">
        <Ico size={20}>
          <path d="M0 15L17 2M1 5c5 3 8 1 13 6" stroke="#555" strokeWidth="1.400" />
          <circle cx="9" cy="7" r="4" fill={LAV} fillOpacity=".7" stroke="#50587f" />
          <path d="M12 10l4 5" stroke="#7a83b5" strokeWidth="2.600" />
        </Ico>
      </IconBtn>
      <span className="ml-3">
        <Pill />
      </span>
    </div>
  </div>
);

// 50 units on the drawing at 198%
const MAJOR = 97.3;
const MINOR = MAJOR / 10;

const HRuler = () => (
  <svg className="block h-[14px] w-full bg-white font-['Liberation_Sans',sans-serif]" shapeRendering="crispEdges">
    {Array.from({ length: 118 }, (_, i) => (
      <path key={i} d={`M${165 + (i - 16) * MINOR} 11v2`} stroke="#333" />
    ))}
    {Array.from({ length: 12 }, (_, i) => {
      const x = 165 + (i - 1) * MAJOR;
      return (
        <g key={i}>
          <path d={`M${x} 2v11`} stroke="#333" />
          <text x={x + 2} y="8" fontSize="8" fill="#222">
            {Math.abs(i - 1) * 50}
          </text>
        </g>
      );
    })}
    <path d="M0 13.500h2000" stroke="#444" />
    <path d="M982 1v12" stroke="#e8d800" strokeWidth="2" />
  </svg>
);

const VRuler = () => (
  <svg className="block h-full w-[14px] bg-white font-['Liberation_Sans',sans-serif]" shapeRendering="crispEdges">
    {Array.from({ length: 76 }, (_, i) => (
      <path key={i} d={`M11 ${66 + (i - 6) * MINOR}h2`} stroke="#333" />
    ))}
    {Array.from({ length: 7 }, (_, i) => {
      const y = 66 + i * MAJOR;
      return (
        <g key={i}>
          <path d={`M1 ${y}h12`} stroke="#333" />
          <text transform={`translate(8 ${y - 2}) rotate(-90)`} fontSize="8" fill="#222">
            {i * 50}
          </text>
        </g>
      );
    })}
    <path d="M13.500 0v2000" stroke="#444" />
    <path d="M1 617h12" stroke="#e8d800" strokeWidth="2" />
  </svg>
);

const Drawing = () => (
  <div className="relative min-w-0 overflow-hidden bg-[#f9f8f0]">
    <svg className="absolute inset-0 h-full w-full" fill="none" shapeRendering="crispEdges">
      <rect x="166" y="62" width="816" height="578" stroke="#dcdbd4" strokeWidth="2" />
      <path d="M570 351.500h6M573.500 348v6" stroke="#333" />
      <path d="M907 558v-5h5M923 553h5v5M928 569v5h-5M912 574h-5v-5M913 560h3M919 560h3M913 568h3M919 568h3" stroke="#deddd5" />
      <path d="M166 640l817-23" stroke="#c9c7b4" strokeDasharray="5 4" shapeRendering="auto" />
      <rect x="165.500" y="616.500" width="817" height="23" stroke="#222" />
      <path d="M0 616.500h1146" stroke="#e02838" strokeWidth="1.500" strokeDasharray="5 5" shapeRendering="auto" />
      <path d="M982 0v684" stroke="#d4505a" strokeWidth="2" strokeDasharray="5 5" />
      <path d="M982.500 603v36M968 616.500h28" stroke="#222" />
      <rect x="395.500" y="613.500" width="6" height="6" fill="#f9f8f0" stroke="#e02838" />
      <rect x="979.500" y="613.500" width="6" height="6" stroke="#a02030" />
      <rect x="981" y="615" width="4" height="4" fill="#222" />
    </svg>
    <div className="absolute top-[579px] left-[929px] flex h-[16px] w-[141px] items-center border border-[#3a3ac0] bg-white pl-[6px] text-[#3030c0]">
      <label htmlFor="dx">△X:</label>
      <input id="dx" defaultValue="420" className="ml-2 w-[40px]" />
      <label htmlFor="dy">△Y:</label>
      <input id="dy" defaultValue="12" className="ml-2 w-[30px]" />
    </div>
  </div>
);

const DocumentArea = () => (
  <main className="flex min-w-0 flex-1 flex-col border-x-2 border-b-2 border-[#b8b8b8] bg-[#f0f0f0]">
    <div className="flex h-[18px] shrink-0 items-end border-t border-[#c8c8c8] bg-[#f8f8f8] pl-px">
      <div className="flex h-[17px] items-center border-r border-[#aaa] bg-white">
        <svg width="17" height="17" fill="none" className="shrink-0">
          <path d="M0 0h17L0 17z" fill="#f4f4f4" />
          <path d="M0 16L14 .5h3" stroke="#aaa" />
        </svg>
        <button className="ml-2 text-[11px] leading-4 font-bold">名称未設定 1</button>
        <button aria-label="タブを閉じる" className="mr-1 ml-[10px]">
          <CloseIcon size={6} />
        </button>
      </div>
      <button aria-label="新規タブ" className="h-[16px] w-[21px] rounded-tr-[4px] border-t border-r border-[#aaa] bg-[#f0f0f0]" />
      <button aria-label="タブ一覧" className="mr-[3px] mb-[6px] ml-auto">
        <Caret />
      </button>
    </div>
    <ViewBar />
    <ModeBar />
    <div className="grid min-h-0 flex-1 grid-cols-[14px_1fr] grid-rows-[14px_1fr] pl-px">
      <button aria-label="原点" className="flex items-center justify-center bg-[#f6ee6e]">
        <svg width="11" height="11" viewBox="0 0 11 11" fill="none" stroke="#222">
          <path d="M5.500 0v11M0 5.500h11" />
          <path d="M5.500 2.500l3 3-3 3-3-3z" fill="#f6ee6e" strokeWidth="1.200" />
        </svg>
      </button>
      <HRuler />
      <VRuler />
      <Drawing />
    </div>
  </main>
);

const ObjectInfo = () => (
  <section className="flex min-h-0 flex-1 flex-col border border-t-0 border-[#c4c4c4]">
    <PanelHeader title="オブジェクト情報 - 形状" menu help />
    <div className="flex h-[24px] shrink-0 items-center bg-[#f8f8f8]">
      {["形状", "データ", "レンダー"].map((t, i) => (
        <button key={t} className={clsx("h-4 border-r px-[5px] leading-4", i === 0 ? "border-[#555]" : "border-[#bbb]")}>
          {t}
        </button>
      ))}
    </div>
    <div className="mx-px h-[17px] shrink-0 border-2 border-[#b0b0b0] pl-px text-[10px] leading-[13px] font-bold">選択図形なし</div>
    <div className="mx-px mt-[2px] min-h-0 flex-1 border border-[#a8a8a8] pt-[41px] text-center">表示可能な項目はありません</div>
    <div className="flex h-[18px] shrink-0 items-center gap-[6px] pr-[2px] pl-1">
      <label htmlFor="objname" className="text-[#777]">
        名前:
      </label>
      <input id="objname" className="h-[13px] min-w-0 flex-1 border border-[#999] bg-[#ececec]" />
    </div>
  </section>
);

const folders = ["Defaults", "オブジェクト - その他", "オブジェクト - 建築 家具", "オブジェクト - 建築", "オブジェクト - 建築設備"];

const Chevron = ({ open }: { open?: boolean }) => (
  <svg width="7" height="7" viewBox="0 0 7 7" fill="none" stroke={open ? "#444" : "#999"} strokeWidth="1.300" className="shrink-0">
    {open ? <path d="M.5 2l3 3 3-3" /> : <path d="M2 .5l3 3-3 3" />}
  </svg>
);

const FolderIcon = () => (
  <svg width="13" height="11" viewBox="0 0 13 11" className="shrink-0">
    <path d="M.5 1.500h4l1 1.500h7v7.500H.5z" fill="#f8d64e" stroke="#9c7c1c" />
    <path d="M1.500 4.500h10" stroke="#fdf0a8" />
  </svg>
);

const ResourceTree = () => (
  <div className="flex h-[109px] shrink-0 overflow-hidden border border-[#b4b4b4] bg-white">
    <ul className="grid h-[116px] flex-1 auto-rows-fr">
      <li className="flex items-center gap-[6px] bg-[#f3f3f3] pl-[5px] font-medium">
        <Chevron open />
        <Logo size={11} inverse />
        開いているファイル
      </li>
      <li className="flex items-center gap-[5px] bg-[#d9d9d9] pl-[21px] font-medium">
        <Chevron />
        <DocIcon size={12} />
        図面枠.vwx
      </li>
      <li className="flex items-center gap-[5px] bg-[#f3f3f3] pl-[5px] font-medium">
        <Chevron open />
        <svg width="13" height="10" viewBox="0 0 12 9" className="shrink-0">
          <path d="M3 8.500c-3 0-3-4 0-4 0-5 6-5 6-1 3 0 3 5 0 5z" fill={LAV} stroke="#59608e" />
        </svg>
        プレミアムライブラリ
      </li>
      {folders.map((f) => (
        <li key={f} className="flex items-center gap-[5px] overflow-hidden pl-[21px]">
          <Chevron />
          <FolderIcon />
          {f}
        </li>
      ))}
    </ul>
    <div className="flex w-3 flex-col items-center bg-[#f0f0f0] py-[4px]">
      <svg width="7" height="5" fill="none" stroke="#444" strokeWidth="1.300" className="shrink-0">
        <path d="M.5 4l3-3 3 3" />
      </svg>
      <span className="mt-[6px] h-[15px] w-full bg-[#cdcdcd]" />
      <svg width="7" height="5" fill="none" stroke="#444" strokeWidth="1.300" className="mt-auto shrink-0">
        <path d="M.5 1l3 3 3-3" />
      </svg>
    </div>
  </div>
);

const previews = [
  "M3 8l6-5 6 5v7H3zM6 15v-5h5v5M9 3v4M1 9a8 8 0 1 0 16 0 8 8 0 1 0-16 0",
  "M9 2v14M9 3a6 6 0 0 0 0 12M11 4l4 3v6l-4 2z",
  "M4 6l3-3h4l3 3 3-1-2 4-2 5-4 2-5-2-2-5zM4 6l5 2 5-2",
];

const ResourceManager = () => (
  <section className="mt-[6px] flex shrink-0 flex-col">
    <PanelHeader title="リソースマネージャ" help />
    <div className="flex h-[24px] items-center pl-1">
      <button aria-label="検索条件">
        <Caret small />
      </button>
      <div className="relative ml-[3px] h-[20px] w-[126px]">
        <input aria-label="検索" placeholder="検索" className="h-full w-full border border-[#bcd] bg-white pl-1 placeholder:text-[#777]" />
        <svg width="13" height="13" fill="none" stroke="#5b7fae" strokeWidth="1.300" className="pointer-events-none absolute top-[3px] right-[3px]">
          <circle cx="8" cy="5" r="4" />
          <path d="M5 8l-4 4" />
        </svg>
      </div>
      <IconBtn label="一覧表示" className="ml-1 h-[20px] w-[30px] border-l border-[#ccc]">
        <svg width="13" height="14" fill="#eee" stroke="#888"><path d="M.5.5h12v13H.5zM.5 7h12" /></svg>
      </IconBtn>
      <div className="ml-[5px] flex">
        {["左パネル", "右パネル"].map((p, i) => (
          <IconBtn key={p} label={p} className="h-[21px] w-[26px] border border-[#2f8ad8] bg-[#cfe6f7]">
            <svg width="13" height="11" fill="#e4e4e4" stroke="#777">
              <path d="M.5.5h12v10H.5zM.5 2.500h12" />
              <path d={i === 0 ? "M4.500 4v5M7 4.500h3M7 6.500h3" : "M8.500 4v5M3 4.500h3M3 6.500h3"} />
            </svg>
          </IconBtn>
        ))}
      </div>
      <span className="ml-[2px] self-start text-[10px] leading-4">»</span>
    </div>
    <ResourceTree />
    <nav className="mt-[3px] flex h-[16px] items-center gap-[7px] border border-[#b4b4b4] bg-white pl-[3px]">
      <DocIcon size={11} />
      <svg width="4" height="6"><path d="M0 0l4 3-4 3z" /></svg>
      開いているファイル
      <svg width="4" height="6"><path d="M0 0l4 3-4 3z" /></svg>
      図面枠.vwx
      <svg width="4" height="6"><path d="M0 0l4 3-4 3z" /></svg>
    </nav>
    <div className="h-[81px] border-x border-[#b4b4b4] bg-white">
      <table className="w-full table-fixed border-collapse text-left">
        <thead>
          <tr className="h-[18px] border-b border-[#ccc] bg-[#f0f0f0]">
            <th className="w-[72px] border-r border-[#ccc] pl-1 font-normal">名前</th>
            <th className="pl-1 font-normal">
              <span className="flex items-center justify-between pr-2">
                タイプ
                <svg width="7" height="5" fill="none" stroke="#777"><path d="M.5 4l3-3 3 3" /></svg>
              </span>
            </th>
          </tr>
        </thead>
        <tbody>
          <tr className="h-[27px] bg-[#cce8ff]">
            <td className="pl-1">
              <span className="flex items-center gap-[3px] whitespace-nowrap">
                <svg width="25" height="21" viewBox="0 0 25 21" className="shrink-0">
                  <path d="M.5 1.500h8l2 2h14v17H.5z" fill="#d5d0ae" stroke="#77745c" />
                  <path d="M.5 5.500h24" stroke="#b5b08e" />
                  <path d="M16 9c-3-2-7 1-3 3s0 6-3 4 0-5 3-4 5-2 3-3z" fill="none" stroke="#6a675a" strokeWidth="1.300" />
                </svg>
                登録画面
              </span>
            </td>
            <td className="pl-[6px]">スクリプトパレット</td>
          </tr>
        </tbody>
      </table>
    </div>
    <div className="h-[15px] border border-[#b4b4b4] bg-white pr-px text-right leading-3">1 項目</div>
    <div className="mt-[3px] border border-[#b4b4b4] bg-white">
      <h3 className="text-[10px] leading-[12px] font-bold">名前:&nbsp;&nbsp;&nbsp;登録画面</h3>
      <p className="leading-[12px]">タイプ: スクリプトパレット</p>
      <div className="mx-auto mt-[2px] mb-[3px] h-[3px] w-1 bg-[#ccc]" />
      <div className="mx-px mb-px flex h-[20px] bg-[#9cb5d6] text-[#839bbb]">
        {previews.map((d, i) => (
          <button key={d} aria-label={`プレビュー ${i + 1}`} className={clsx("flex w-9 items-center justify-center", i < 2 && "border-r border-[#8fa9cb]")}>
            <svg width="17" height="17" viewBox="0 0 18 18" fill="none" stroke="currentColor" strokeWidth="1.200">
              <path d={d} />
            </svg>
          </button>
        ))}
      </div>
    </div>
    <div className="mt-[3px] h-[49px] border border-[#b4b4b4]">
      <h3 className="h-[14px] border-b border-[#bbb] leading-3 font-bold">データ</h3>
      <p className="h-[33px] border-l border-[#bbb] bg-white text-center leading-[32px]">表示可能な項目はありません</p>
    </div>
    <div className="mt-[2px] flex h-[20px] gap-[7px] pl-[7px]">
      <button className="w-[59px] border border-[#b8cfe2] bg-white">新規リソース...</button>
      <button className="w-[59px] border border-[#b8cfe2] bg-white">新規フォルダ...</button>
    </div>
  </section>
);

const snaps: { name: string; on?: boolean; dark?: boolean; d: string }[] = [
  { name: "グリッド", d: "M3 4h3M4.500 2.500v3M11 4h3M12.500 2.500v3M3 12h3M4.500 10.500v3M11 12h3M12.500 10.500v3" },
  { name: "図形", on: true, d: "M4 4h10v10H4zM2 4h4M4 2v4M12 4h4M14 2v4" },
  { name: "角度", on: true, d: "M3 3v12h12M3 15L14 4M5 5l9 9" },
  { name: "交点", on: true, d: "M3 3l12 12M15 3L3 15" },
  { name: "スマートポイント", on: true, d: "M2 2h5v5H2zM9 4h2M13 4h2M4 9v2M4 13v2" },
  { name: "定点", d: "M3 15L15 3M10 12h3M4 6h2" },
  { name: "スマートエッジ", d: "M3 15L13 3M8 8l7 5M3 10h6" },
  { name: "接線", d: "M2 4c6 0 9 3 10 11M5 3l11 9" },
  { name: "作業面", dark: true, d: "M9 3l7 6-7 6-7-6zM5.500 6l7 6M12.500 6l-7 6" },
];

const SnapBar = () => (
  <div className="mt-[3px] flex h-[15px] shrink-0 items-start overflow-hidden pl-[7px]">
    {snaps.map((s) => (
      <button
        key={s.name}
        aria-label={s.name}
        className={clsx(
          "ml-px flex h-[18px] w-[20px] shrink-0 items-center justify-center border border-[#c0c8d0]",
          s.on && "bg-[#cbe3f6]",
          s.dark && "bg-[#999]",
        )}
      >
        <Ico size={16}>
          <path d={s.d} stroke="#333" />
        </Ico>
      </button>
    ))}
    <div className="flex h-[18px] gap-px pl-[3px]">
      <IconBtn label="一時停止" className="w-[20px] border border-[#ccc]">
        <svg width="7" height="8"><path d="M0 0h2.500v8H0zM4.500 0H7v8H4.500z" /></svg>
      </IconBtn>
      <IconBtn label="スナップ設定" className="w-[20px] border border-[#ccc]">
        <svg width="10" height="10" viewBox="0 0 10 10" fill="none" stroke="#111">
          <circle cx="5" cy="5" r="2.700" strokeWidth="2" />
          <circle cx="5" cy="5" r="4.200" strokeWidth="1.400" strokeDasharray="1.600 1.700" />
        </svg>
      </IconBtn>
    </div>
  </div>
);

export default function App() {
  return (
    <div
      lang="ja"
      className="flex h-screen flex-col overflow-hidden bg-[#f0f0f0] font-['Open_Sans','Noto_Sans_CJK_JP',sans-serif] text-[9px] leading-4 whitespace-nowrap text-[#1a1a1a] [font-feature-settings:'palt']"
    >
      <TitleBar />
      <MenuBar />
      <div className="flex min-h-0 flex-1 pt-px">
        <div className="flex min-w-0 flex-1 flex-col">
          <div className="flex min-h-0 flex-1 gap-1">
            <LeftColumn />
            <DocumentArea />
          </div>
          <footer className="flex h-[17px] shrink-0 items-center pt-[6px] pl-[2px]">
            <p className="flex-1">ヘルプを表示するには、F1キーまたは「?」アイコンをクリックしてください。</p>
            <span className="w-[86px] text-[11px]">X: 420</span>
            <span className="w-[76px] text-[11px]">Y: -283.1</span>
          </footer>
        </div>
        <div className="ml-[5px] flex w-[240px] shrink-0 flex-col">
          <ObjectInfo />
          <ResourceManager />
          <SnapBar />
        </div>
      </div>
    </div>
  );
}
